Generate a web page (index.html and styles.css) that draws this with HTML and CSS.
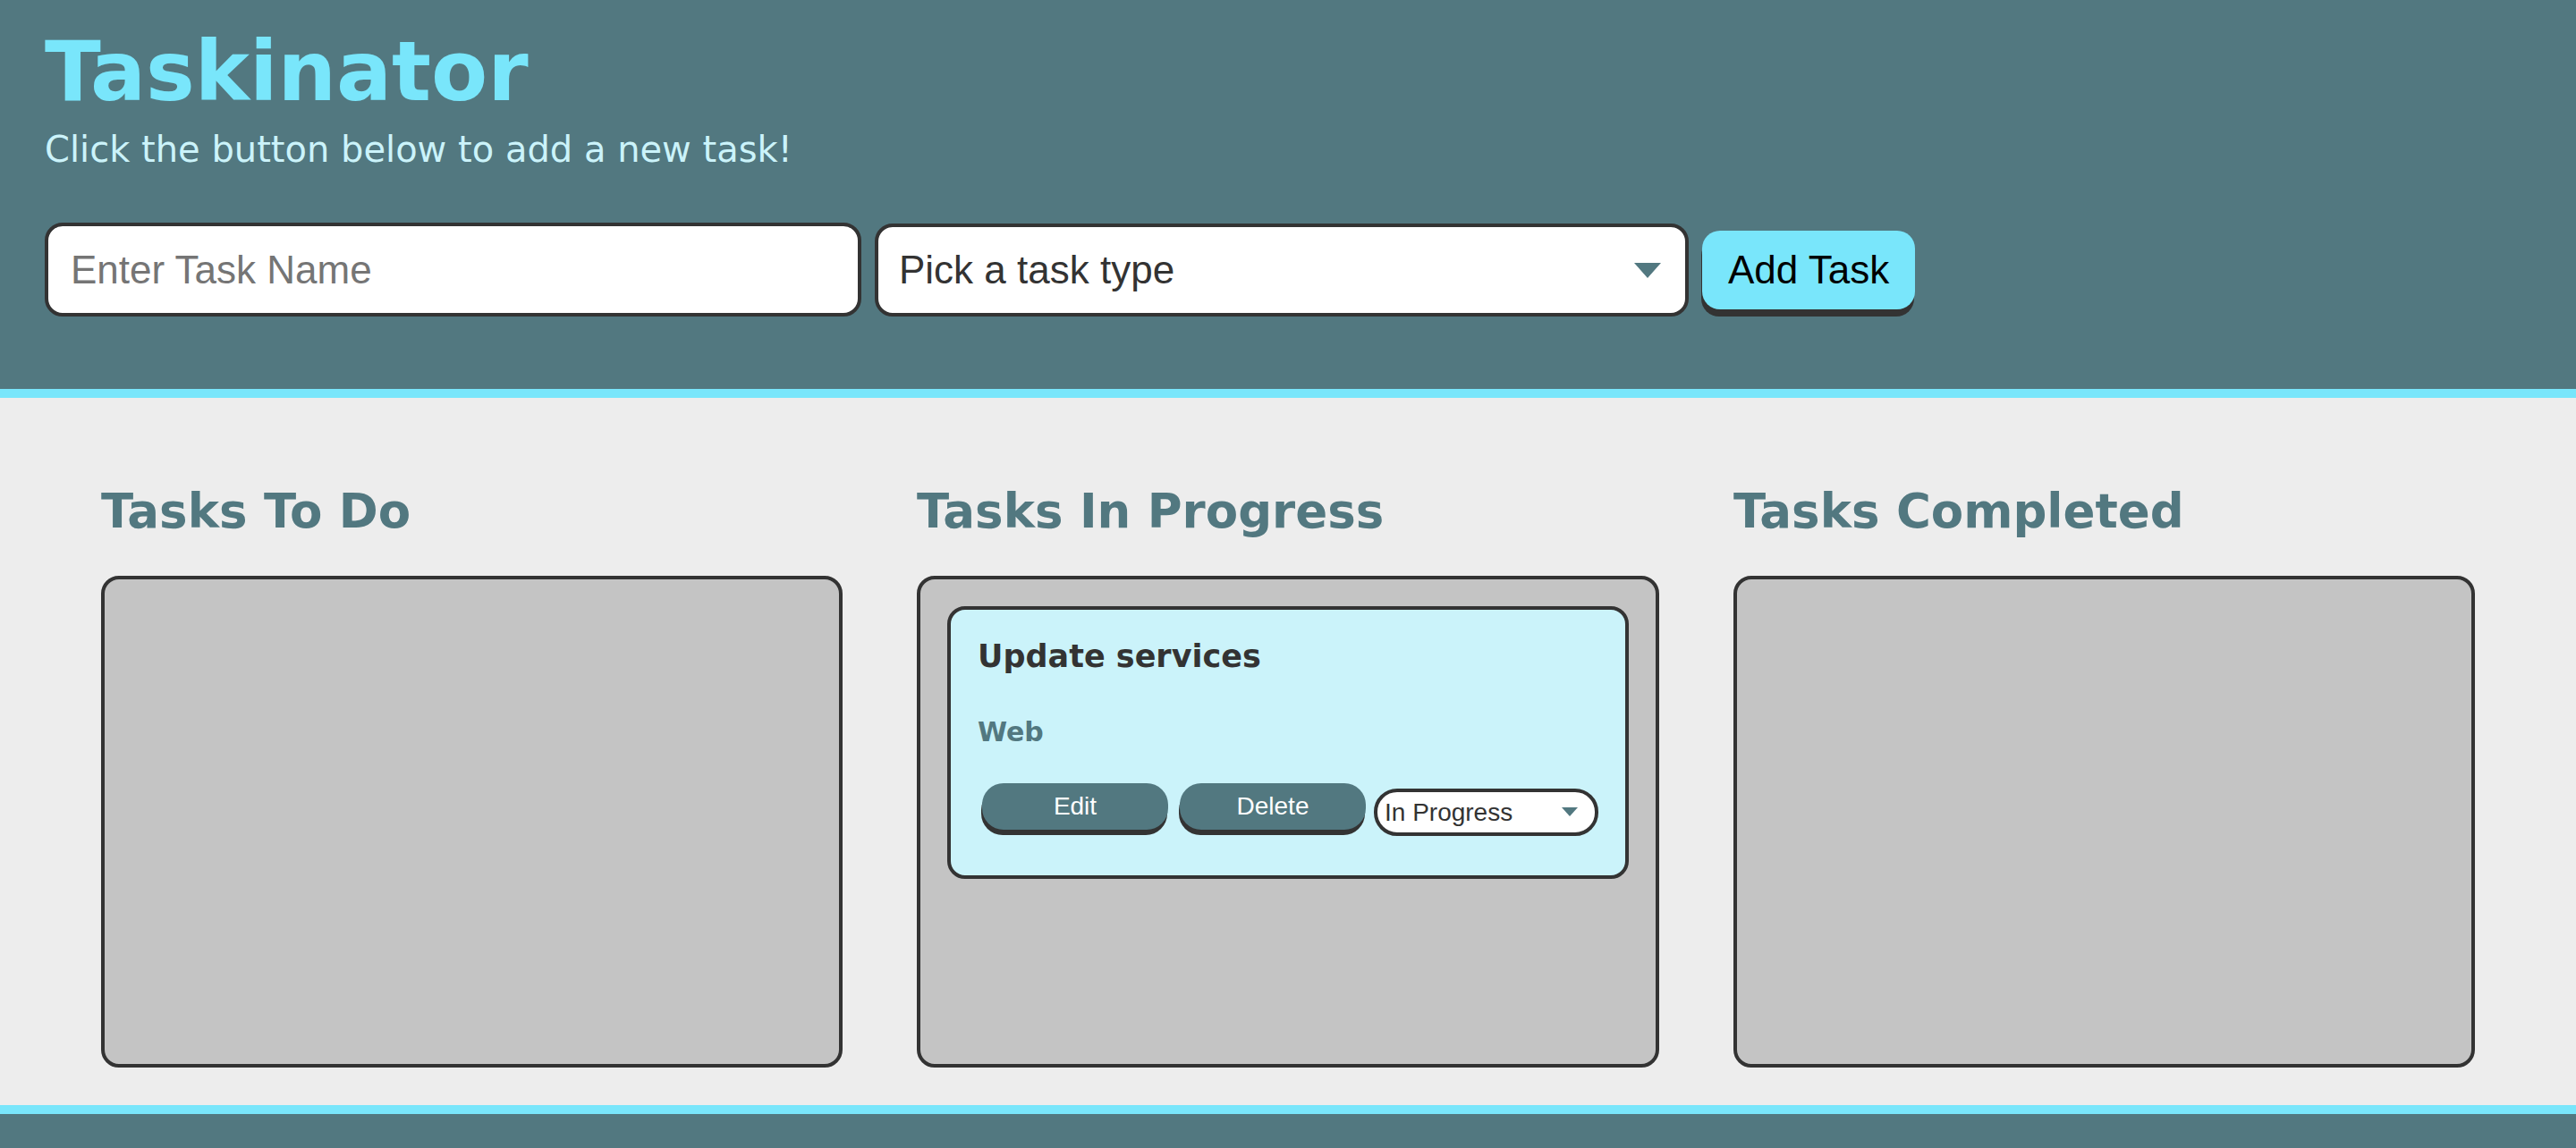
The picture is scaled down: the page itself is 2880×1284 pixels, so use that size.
FILE: index.html
```html
<!DOCTYPE html>
<html lang="en">
<head>
    <meta charset="UTF-8">
    <meta name="viewport" content="width=device-width, initial-scale=1.0">
    <title>Taskinator</title>
    <link rel="stylesheet" href="styles.css">
</head>
<body>
    <header class="header">
        <h1 class="page-title">Taskinator</h1>
        <p>Click the button below to add a new task!</p>
        <form class="task-form" id="task-form">
            <input type="text" name="task-name" class="text-input" placeholder="Enter Task Name">
            <div class="select-wrap">
                <select name="task-type" class="select-input">
                    <option value="" disabled selected>Pick a task type</option>
                    <option value="Web">Web</option>
                    <option value="Mobile">Mobile</option>
                    <option value="Print">Print</option>
                </select>
            </div>
            <button class="btn add-btn" type="submit">Add Task</button>
        </form>
    </header>

    <main class="page-content">
        <section class="task-list-wrapper">
            <h2 class="list-title">Tasks To Do</h2>
            <ul class="task-list" id="tasks-to-do"></ul>
        </section>
        <section class="task-list-wrapper">
            <h2 class="list-title">Tasks In Progress</h2>
            <ul class="task-list" id="tasks-in-progress">
                <li class="task-item">
                    <h3 class="task-name">Update services</h3>
                    <span class="task-type">Web</span>
                    <div class="task-actions">
                        <button class="btn small-btn edit-btn">Edit</button>
                        <button class="btn small-btn delete-btn">Delete</button>
                        <div class="status-wrap">
                            <select class="select-status" name="status-change">
                                <option>To Do</option>
                                <option selected>In Progress</option>
                                <option>Completed</option>
                            </select>
                        </div>
                    </div>
                </li>
            </ul>
        </section>
        <section class="task-list-wrapper">
            <h2 class="list-title">Tasks Completed</h2>
            <ul class="task-list" id="tasks-completed"></ul>
        </section>
    </main>

    <footer class="footer"></footer>
</body>
</html>
```

FILE: styles.css
```css
* {
    box-sizing: border-box;
}

body {
    margin: 0;
    background-color: #ededed;
    font-family: "DejaVu Sans", Verdana, sans-serif;
}

.header {
    height: 445px;
    padding: 28px 50px 0;
    background-color: #527880;
    border-bottom: 10px solid #79e6fb;
}

.page-title {
    margin: 0;
    font-size: 92px;
    line-height: 106px;
    font-weight: bold;
    color: #79e6fb;
}

.header p {
    margin: 9px 0 0;
    font-size: 40px;
    line-height: 48px;
    color: #cbf3fa;
}

.task-form {
    display: flex;
    align-items: center;
    gap: 15px;
    margin-top: 58px;
}

.text-input,
.select-input {
    height: 105px;
    border: 4px solid #333;
    border-radius: 20px;
    background-color: white;
    font-family: "Liberation Sans", Arial, sans-serif;
    font-size: 44px;
    color: #333;
}

.text-input {
    width: 913px;
    padding: 0 25px;
}

.text-input::placeholder {
    color: #757575;
}

.select-wrap {
    position: relative;
    width: 910px;
}

.select-input {
    width: 100%;
    height: 104px;
    padding: 0 80px 0 23px;
    appearance: none;
    -webkit-appearance: none;
}

.select-wrap::after {
    content: "";
    position: absolute;
    right: 31px;
    top: 44px;
    border-left: 15px solid transparent;
    border-right: 15px solid transparent;
    border-top: 17px solid #527880;
    pointer-events: none;
}

.btn {
    border: none;
    cursor: pointer;
    font-family: "Liberation Sans", Arial, sans-serif;
}

.add-btn {
    height: 88px;
    padding: 0 29px;
    border-radius: 20px;
    background-color: #79e6fb;
    color: black;
    font-size: 44px;
    box-shadow: -1px 8px 0 #333;
}

.page-content {
    display: flex;
    gap: 83px;
    padding: 95px 113px 42px;
}

.task-list-wrapper {
    flex: 1;
}

.list-title {
    margin: 0 0 41px;
    font-size: 53px;
    line-height: 63px;
    color: #527880;
}

.task-list {
    height: 550px;
    margin: 0;
    padding: 30px;
    list-style: none;
    background-color: #c4c4c4;
    border: 4px solid #333;
    border-radius: 20px;
}

.task-item {
    padding: 31px 30px 44px;
    background-color: #cbf3fa;
    border: 4px solid #333;
    border-radius: 20px;
}

.task-name {
    margin: 0;
    font-size: 35px;
    line-height: 42px;
    color: #333;
}

.task-type {
    display: block;
    margin-top: 46px;
    font-size: 30px;
    line-height: 36px;
    font-weight: bold;
    color: #527880;
}

.task-actions {
    display: flex;
    align-items: flex-start;
    margin-top: 39px;
}

.small-btn {
    width: 208px;
    height: 52px;
    border-radius: 24px;
    background-color: #527880;
    color: white;
    font-size: 28px;
    box-shadow: -1px 6px 0 #333;
}

.edit-btn {
    margin-left: 5px;
}

.delete-btn {
    margin-left: 13px;
}

.status-wrap {
    position: relative;
    margin: 6px 0 0 9px;
}

.select-status {
    width: 251px;
    height: 53px;
    padding: 0 40px 0 8px;
    border: 4px solid #333;
    border-radius: 26px;
    background-color: white;
    font-family: "Liberation Sans", Arial, sans-serif;
    font-size: 28px;
    color: #333;
    appearance: none;
    -webkit-appearance: none;
}

.status-wrap::after {
    content: "";
    position: absolute;
    right: 23px;
    top: 21px;
    border-left: 9px solid transparent;
    border-right: 9px solid transparent;
    border-top: 10px solid #527880;
    pointer-events: none;
}

.footer {
    height: 120px;
    background-color: #527880;
    border-top: 10px solid #79e6fb;
}
```
